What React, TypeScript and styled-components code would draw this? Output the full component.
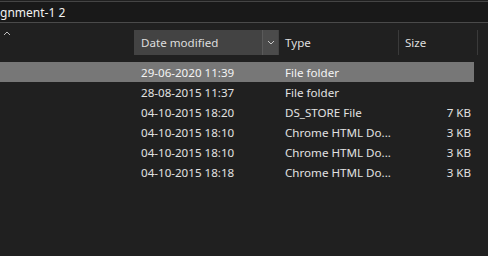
import * as React from "react";
import styled, { createGlobalStyle } from "styled-components";

const GlobalStyle = createGlobalStyle`
  html, body {
    margin: 0;
    padding: 0;
    background: #202020;
  }
  body {
    font-family: "Noto Sans", "Open Sans", sans-serif;
    font-size: 11.6px;
    color: #e4e4e4;
    width: 488px;
    height: 256px;
    overflow: hidden;
  }
`;

const Window = styled.div`
  display: flex;
  flex-direction: column;
  height: 256px;
  background: #202020;
`;

const AddressBar = styled.div`
  margin-top: 1px;
  height: 20px;
  border-top: 1px solid #454545;
  border-bottom: 1px solid #4a4a4a;
  background: #191919;
  display: flex;
  align-items: center;
  color: #f2f2f2;
  font-size: 12px;
  white-space: nowrap;
  overflow: hidden;
`;

const HeaderRow = styled.div`
  margin-top: 7px;
  height: 25px;
  display: grid;
  grid-template-columns: 134px 145px 120px 79px;
`;

const NameHead = styled.div`
  position: relative;
`;

const SortArrow = styled.svg`
  position: absolute;
  left: 3px;
  top: 0;
`;

const HeadCell = styled.div<{ $hover?: boolean; $pad?: number }>`
  display: flex;
  align-items: center;
  padding-left: ${(p) => p.$pad ?? 6}px;
  color: #dedede;
  background: ${(p) => (p.$hover ? "#434343" : "transparent")};
  border-right: 1px solid ${(p) => (p.$hover ? "transparent" : "#3a3a3a")};
  box-sizing: border-box;
`;

const HeadLabel = styled.span`
  flex: 1;
`;

const DropPart = styled.div`
  width: 15px;
  height: 100%;
  display: flex;
  align-items: center;
  justify-content: center;
  background: #4b4b4b;
  border-left: 1px solid #5a5a5a;
`;

const List = styled.div`
  margin-top: 7px;
  display: flex;
  flex-direction: column;
`;

const Row = styled.div<{ $selected?: boolean }>`
  width: 474px;
  height: 20px;
  display: grid;
  grid-template-columns: 134px 145px 120px 75px;
  align-items: center;
  background: ${(p) => (p.$selected ? "#777777" : "transparent")};
  color: ${(p) => (p.$selected ? "#f4f4f4" : "#e2e2e2")};
  white-space: nowrap;
`;

const Cell = styled.div<{ $pad?: number; $right?: boolean }>`
  padding-left: ${(p) => (p.$right ? 0 : p.$pad ?? 0)}px;
  padding-right: ${(p) => (p.$right ? 3 : 0)}px;
  text-align: ${(p) => (p.$right ? "right" : "left")};
  overflow: visible;
`;

const files = [
  { date: "29-06-2020 11:39", type: "File folder", size: "", selected: true },
  { date: "28-08-2015 11:37", type: "File folder", size: "" },
  { date: "04-10-2015 18:20", type: "DS_STORE File", size: "7 KB" },
  { date: "04-10-2015 18:10", type: "Chrome HTML Do...", size: "3 KB" },
  { date: "04-10-2015 18:10", type: "Chrome HTML Do...", size: "3 KB" },
  { date: "04-10-2015 18:18", type: "Chrome HTML Do...", size: "3 KB" },
];

export default function App() {
  return (
    <Window>
      <GlobalStyle />
      <AddressBar>gnment-1 2</AddressBar>
      <HeaderRow>
        <NameHead>
          <SortArrow width="8" height="6" viewBox="0 0 8 6">
            <path d="M1 5 L4 2 L7 5" fill="none" stroke="#bdbdbd" strokeWidth="1" />
          </SortArrow>
        </NameHead>
        <HeadCell $hover $pad={7}>
          <HeadLabel>Date modified</HeadLabel>
          <DropPart>
            <svg width="8" height="5" viewBox="0 0 8 5">
              <path d="M1 1 L4 4 L7 1" fill="none" stroke="#c8c8c8" strokeWidth="1" />
            </svg>
          </DropPart>
        </HeadCell>
        <HeadCell>Type</HeadCell>
        <HeadCell>Size</HeadCell>
      </HeaderRow>
      <List>
        {files.map((f, i) => (
          <Row key={i} $selected={f.selected}>
            <Cell />
            <Cell $pad={7}>{f.date}</Cell>
            <Cell $pad={6}>{f.type}</Cell>
            <Cell $right>{f.size}</Cell>
          </Row>
        ))}
      </List>
    </Window>
  );
}
